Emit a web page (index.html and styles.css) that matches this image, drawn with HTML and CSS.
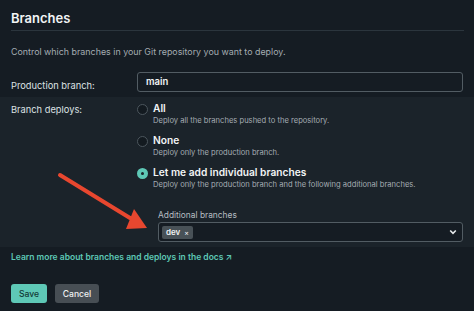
FILE: index.html
```html
<!DOCTYPE html>
<html>
<head>
  <title>Branches</title>
  <link rel="stylesheet" href="styles.css">
</head>
<body>
  <div class="panel">
    <h2>Branches</h2>
    <p class="intro">Control which branches in your Git repository you want to deploy.</p>

    <div class="row prod">
      <label class="row-label">Production branch:</label>
      <div class="input">main</div>
    </div>

    <div class="band">
      <div class="row deploys">
        <label class="row-label">Branch deploys:</label>
        <div class="options">
          <div class="option">
            <span class="radio"></span>
            <div>
              <div class="opt-title">All</div>
              <div class="opt-desc">Deploy all the branches pushed to the repository.</div>
            </div>
          </div>
          <div class="option">
            <span class="radio"></span>
            <div>
              <div class="opt-title">None</div>
              <div class="opt-desc">Deploy only the production branch.</div>
            </div>
          </div>
          <div class="option">
            <span class="radio checked"></span>
            <div>
              <div class="opt-title">Let me add individual branches</div>
              <div class="opt-desc">Deploy only the production branch and the following additional branches.</div>
            </div>
          </div>
          <div class="additional">
            <div class="add-label">Additional branches</div>
            <div class="select">
              <span class="tag">dev <span class="x">&times;</span></span>
              <svg class="chev" width="8" height="6" viewBox="0 0 8 6"><path d="M1.2 1.5 L4 4.3 L6.8 1.5" fill="none" stroke="#e6e9eb" stroke-width="1.6"/></svg>
            </div>
          </div>
        </div>
      </div>
    </div>

    <a class="docs" href="#">Learn more about branches and deploys in the docs &#8599;</a>

    <div class="actions">
      <button class="save">Save</button>
      <button class="cancel">Cancel</button>
    </div>

    <!-- annotation arrow -->
    <svg class="arrow" width="474" height="311" viewBox="0 0 474 311">
      <line x1="60" y1="175" x2="130" y2="218" stroke="#e8472f" stroke-width="4" stroke-linecap="round"/>
      <polygon points="147,228 126,229 134,209" fill="#e8472f"/>
    </svg>
  </div>
</body>
</html>
```

FILE: styles.css
```css
body {
  margin: 0;
  background-color: #151c23;
  font-family: Inter, "Liberation Sans", sans-serif;
  color: #dde1e4;
}

.panel {
  position: relative;
  width: 474px;
  height: 311px;
  overflow: hidden;
}

h2 {
  margin: 0 10px 0 11px;
  padding: 10px 0 4px;
  line-height: 16px;
  font-size: 13px;
  font-weight: 600;
  color: #f2f4f5;
  border-bottom: 1px solid #2b353d;
}

.intro {
  margin: 15px 11px 0;
  line-height: 12px;
  font-size: 8.9px;
  color: #a4acb2;
}

.row {
  display: flex;
  padding: 0 11px;
}

.row-label {
  width: 126px;
  font-size: 9.3px;
  line-height: 12px;
  color: #dde1e4;
}

.prod {
  margin-top: 14px;
  align-items: flex-end;
  padding-bottom: 5px;
}

.input {
  flex: 1;
  height: 20px;
  box-sizing: border-box;
  line-height: 18px;
  padding: 0 8px;
  border: 1px solid #525c63;
  border-radius: 3px;
  font-size: 9.5px;
  font-weight: 600;
  color: #f2f4f5;
  background-color: #151c23;
}

.band {
  background-color: #1b232a;
  padding: 5px 0 5px;
}

.deploys .row-label {
  padding-top: 2px;
}

.options {
  flex: 1;
}

.option {
  display: flex;
  gap: 5px;
  margin-bottom: 8px;
}

.radio {
  width: 9px;
  height: 9px;
  margin-top: 2px;
  border: 1px solid #4c565d;
  border-radius: 50%;
  background-color: #131a20;
  box-sizing: content-box;
}

.radio.checked {
  width: 3px;
  height: 3px;
  border: 4px solid #5ec8b6;
  background-color: #1b232a;
}

.opt-title {
  font-size: 10.2px;
  font-weight: 600;
  color: #f2f4f5;
  line-height: 13px;
}

.opt-desc {
  font-size: 7.6px;
  color: #a4acb2;
  line-height: 11px;
}

.additional {
  margin: 20px 0 0 21px;
}

.add-label {
  font-size: 8.4px;
  line-height: 11px;
  color: #b6bdc2;
  margin-bottom: 1px;
}

.select {
  display: flex;
  align-items: center;
  justify-content: space-between;
  height: 20px;
  box-sizing: border-box;
  padding: 0 5px 0 3px;
  border: 1px solid #525c63;
  border-radius: 3px;
  background-color: #151c23;
}

.tag {
  background-color: #485157;
  color: #f2f4f5;
  font-size: 8px;
  font-weight: 600;
  line-height: 12px;
  padding: 0 4px;
  border-radius: 2px;
}

.tag .x {
  font-size: 7px;
  font-weight: 400;
  margin-left: 2px;
}

.docs {
  display: block;
  margin: 4px 11px 0;
  line-height: 12px;
  font-size: 8.5px;
  font-weight: 600;
  color: #5ec8b6;
  text-decoration: none;
}

.actions {
  display: flex;
  gap: 8px;
  margin: 21px 11px 0;
}

.actions button {
  border: none;
  border-radius: 3px;
  height: 19px;
  padding: 0 7px;
  font-family: inherit;
  font-size: 8.6px;
  font-weight: 500;
}

.save {
  width: 36px;
  background-color: #5ec8b6;
  color: #123a36;
}

.cancel {
  width: 44px;
  background-color: #474e54;
  color: #eef0f2;
}

.arrow {
  position: absolute;
  left: 0;
  top: 0;
  pointer-events: none;
}
```
